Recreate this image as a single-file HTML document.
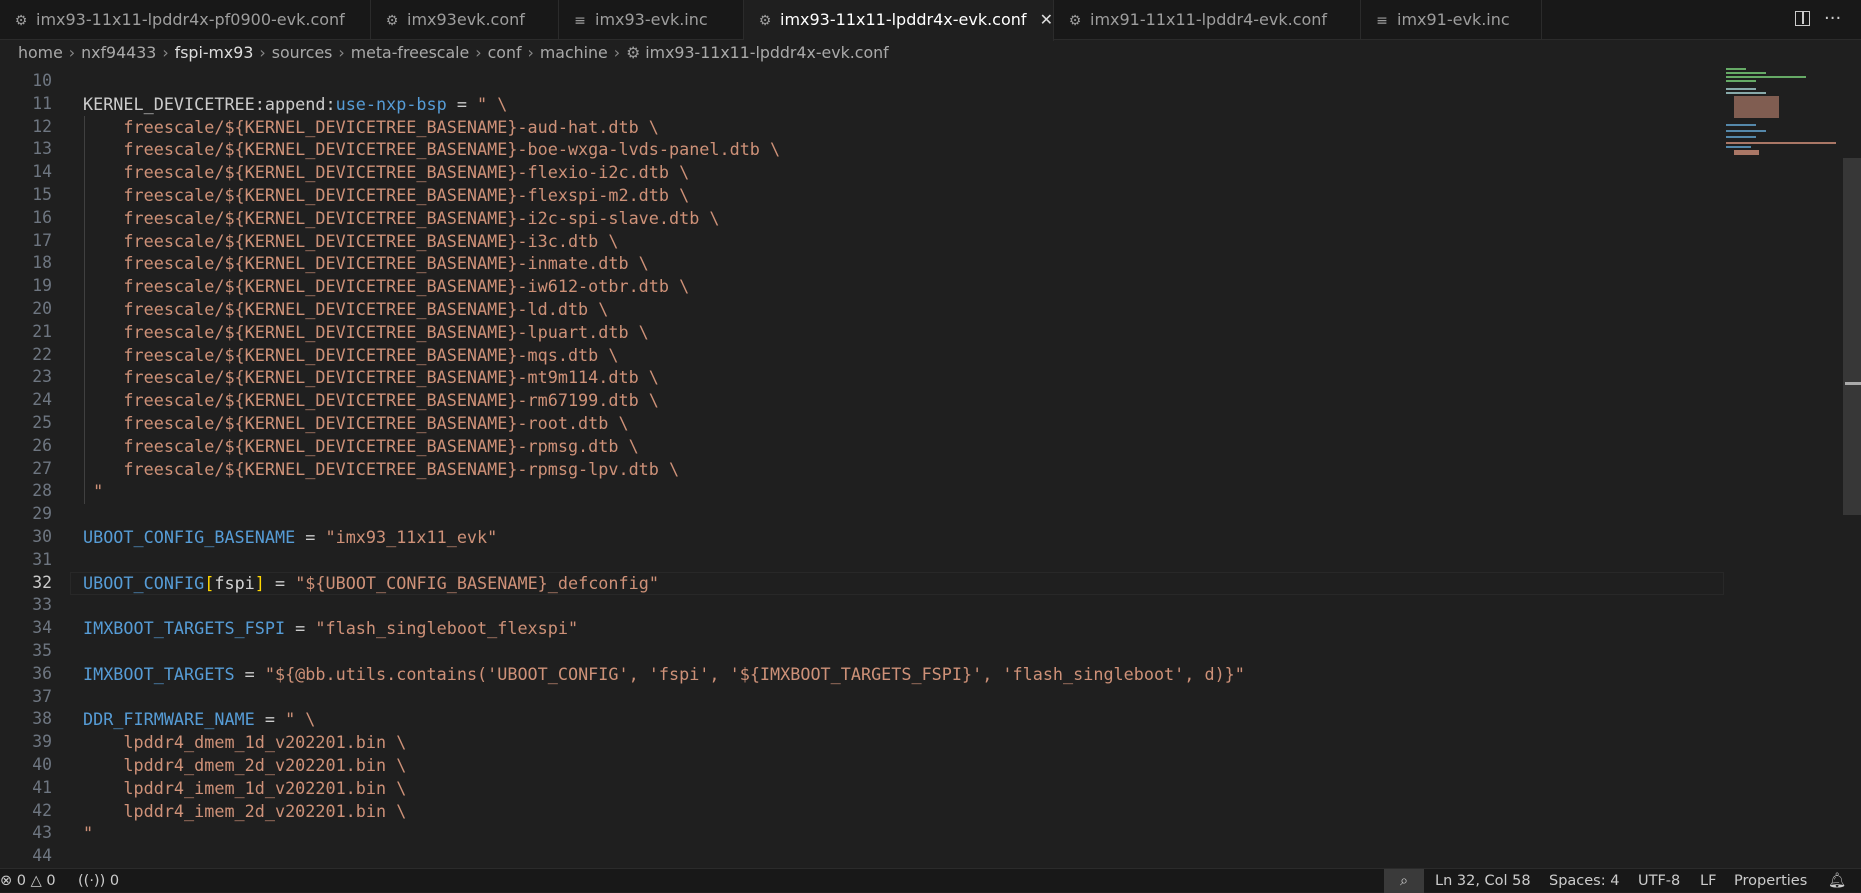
<!DOCTYPE html>
<html><head><meta charset="utf-8"><style>
*{margin:0;padding:0;box-sizing:border-box}
body{width:1861px;height:892px;background:#1f1f1f;overflow:hidden;position:relative;font-family:"DejaVu Sans","Liberation Sans",sans-serif;color:#cccccc}
.tabs{position:absolute;left:0;top:0;width:1861px;height:40px;background:#181818;border-bottom:1px solid #2b2b2b}
.tab{position:absolute;top:0;height:40px;border-right:1px solid #2b2b2b;font-size:16px;color:#9d9d9d;line-height:40px;padding-left:14px;white-space:nowrap}
.tab.act{background:#1f1f1f;color:#ffffff;height:41px}
.ic{display:inline-block;width:14px;color:#9d9d9d;font-size:14px;margin-right:8px;text-align:center}
.bc{position:absolute;left:0;top:40px;height:26px;width:1861px;font-size:15.8px;line-height:26px;color:#a9a9a9;padding-left:18px;white-space:nowrap}
.bc .s{margin:0 6px;color:#888}
pre{position:absolute;left:83px;top:70px;font-family:"DejaVu Sans Mono","Liberation Mono",monospace;font-size:16.8px;line-height:22.8px;color:#cccccc}
.lnums{position:absolute;left:0;top:70px;width:52px;text-align:right;font-family:"DejaVu Sans Mono",monospace;font-size:16.4px;line-height:22.8px;color:#6e7681}
.o{color:#ce9178}.b{color:#569cd6}.y{color:#ffd700}.w{color:#d4d4d4}
.cur{position:absolute;left:70px;top:572px;width:1654px;height:23px;border:1px solid #282828}
.guide{position:absolute;left:84px;top:116px;width:1px;height:388px;background:#404040}
.status{position:absolute;left:0;top:868px;width:1861px;height:24px;background:#181818;border-top:1px solid #2b2b2b;font-size:14.5px;line-height:24px;color:#cccccc}
.status span{position:absolute;top:0}
.mini{position:absolute;left:1724px;top:66px;width:119px;height:90px}
.mini div{position:absolute;height:1.5px}
</style></head><body>
<div class="tabs">
<div class="tab" style="left:0;width:371px"><span class="ic">⚙</span>imx93-11x11-lpddr4x-pf0900-evk.conf</div>
<div class="tab" style="left:371px;width:188px"><span class="ic">⚙</span>imx93evk.conf</div>
<div class="tab" style="left:559px;width:185px"><span class="ic">≡</span>imx93-evk.inc</div>
<div class="tab act" style="left:744px;width:310px"><span class="ic">⚙</span>imx93-11x11-lpddr4x-evk.conf <span style="margin-left:8px;color:#ddd">✕</span></div>
<div class="tab" style="left:1054px;width:307px"><span class="ic">⚙</span>imx91-11x11-lpddr4-evk.conf</div>
<div class="tab" style="left:1361px;width:181px"><span class="ic">≡</span>imx91-evk.inc</div>
<div style="position:absolute;left:1795px;top:11px;width:15px;height:15px;border:1.5px solid #ccc"><div style="position:absolute;left:6px;top:0;width:1.5px;height:12px;background:#ccc"></div></div>
<div style="position:absolute;left:1824px;top:0;line-height:38px;font-size:18px;color:#ccc">···</div>
</div>
<div class="bc">home<span class="s">›</span>nxf94433<span class="s">›</span><span style="color:#ddd">fspi-mx93</span><span class="s">›</span>sources<span class="s">›</span>meta-freescale<span class="s">›</span>conf<span class="s">›</span>machine<span class="s">›</span><span style="color:#9d9d9d">⚙</span> imx93-11x11-lpddr4x-evk.conf</div>
<div class="guide"></div>
<div class="cur"></div>
<div class="lnums">10<br>11<br>12<br>13<br>14<br>15<br>16<br>17<br>18<br>19<br>20<br>21<br>22<br>23<br>24<br>25<br>26<br>27<br>28<br>29<br>30<br>31<br><span style="color:#ccc">32</span><br>33<br>34<br>35<br>36<br>37<br>38<br>39<br>40<br>41<br>42<br>43<br>44</div>
<pre>

KERNEL_DEVICETREE:append:<span class="b">use-nxp-bsp</span> = <span class="o">" \</span>
<span class="o">    freescale/${KERNEL_DEVICETREE_BASENAME}-aud-hat.dtb \</span>
<span class="o">    freescale/${KERNEL_DEVICETREE_BASENAME}-boe-wxga-lvds-panel.dtb \</span>
<span class="o">    freescale/${KERNEL_DEVICETREE_BASENAME}-flexio-i2c.dtb \</span>
<span class="o">    freescale/${KERNEL_DEVICETREE_BASENAME}-flexspi-m2.dtb \</span>
<span class="o">    freescale/${KERNEL_DEVICETREE_BASENAME}-i2c-spi-slave.dtb \</span>
<span class="o">    freescale/${KERNEL_DEVICETREE_BASENAME}-i3c.dtb \</span>
<span class="o">    freescale/${KERNEL_DEVICETREE_BASENAME}-inmate.dtb \</span>
<span class="o">    freescale/${KERNEL_DEVICETREE_BASENAME}-iw612-otbr.dtb \</span>
<span class="o">    freescale/${KERNEL_DEVICETREE_BASENAME}-ld.dtb \</span>
<span class="o">    freescale/${KERNEL_DEVICETREE_BASENAME}-lpuart.dtb \</span>
<span class="o">    freescale/${KERNEL_DEVICETREE_BASENAME}-mqs.dtb \</span>
<span class="o">    freescale/${KERNEL_DEVICETREE_BASENAME}-mt9m114.dtb \</span>
<span class="o">    freescale/${KERNEL_DEVICETREE_BASENAME}-rm67199.dtb \</span>
<span class="o">    freescale/${KERNEL_DEVICETREE_BASENAME}-root.dtb \</span>
<span class="o">    freescale/${KERNEL_DEVICETREE_BASENAME}-rpmsg.dtb \</span>
<span class="o">    freescale/${KERNEL_DEVICETREE_BASENAME}-rpmsg-lpv.dtb \</span>
<span class="o"> "</span>

<span class="b">UBOOT_CONFIG_BASENAME</span> = <span class="o">"imx93_11x11_evk"</span>

<span class="b">UBOOT_CONFIG</span><span class="y">[</span><span class="w">fspi</span><span class="y">]</span> = <span class="o">"${UBOOT_CONFIG_BASENAME}_defconfig"</span>

<span class="b">IMXBOOT_TARGETS_FSPI</span> = <span class="o">"flash_singleboot_flexspi"</span>

<span class="b">IMXBOOT_TARGETS</span> = <span class="o">"${@bb.utils.contains('UBOOT_CONFIG', 'fspi', '${IMXBOOT_TARGETS_FSPI}', 'flash_singleboot', d)}"</span>

<span class="b">DDR_FIRMWARE_NAME</span> = <span class="o">" \</span>
<span class="o">    lpddr4_dmem_1d_v202201.bin \</span>
<span class="o">    lpddr4_dmem_2d_v202201.bin \</span>
<span class="o">    lpddr4_imem_1d_v202201.bin \</span>
<span class="o">    lpddr4_imem_2d_v202201.bin \</span>
<span class="o">"</span>
</pre>
<div class="mini">
<div style="left:2px;top:2px;width:20px;background:#6a6"></div>
<div style="left:2px;top:6px;width:40px;background:#6a6"></div>
<div style="left:2px;top:10px;width:80px;background:#6a6"></div>
<div style="left:2px;top:14px;width:30px;background:#6a6"></div>
<div style="left:2px;top:22px;width:30px;background:#8aa"></div>
<div style="left:2px;top:26px;width:40px;background:#8aa"></div>
<div style="left:10px;top:30px;width:45px;background:#a76;height:22px;opacity:.7"></div>
<div style="left:2px;top:58px;width:30px;background:#58a"></div>
<div style="left:2px;top:64px;width:40px;background:#58a"></div>
<div style="left:2px;top:70px;width:30px;background:#58a"></div>
<div style="left:2px;top:76px;width:110px;background:#a76"></div>
<div style="left:2px;top:80px;width:25px;background:#58a"></div>
<div style="left:10px;top:84px;width:25px;background:#a76;height:5px"></div>
</div>
<div style="position:absolute;left:1843px;top:158px;width:18px;height:357px;background:#424242;opacity:.7"></div>
<div style="position:absolute;left:1845px;top:382px;width:16px;height:3px;background:#aaa"></div>
<div class="status">
<span style="left:0">⊗ 0 △ 0</span>
<span style="left:78px">((·)) 0</span>
<span style="left:1384px;width:40px;height:24px;background:#3a3a3a;text-align:center">⌕</span>
<span style="left:1435px">Ln 32, Col 58</span>
<span style="left:1549px">Spaces: 4</span>
<span style="left:1638px">UTF-8</span>
<span style="left:1700px">LF</span>
<span style="left:1734px">Properties</span>
<span style="left:1828px">🔔︎</span>
</div>
</body></html>
